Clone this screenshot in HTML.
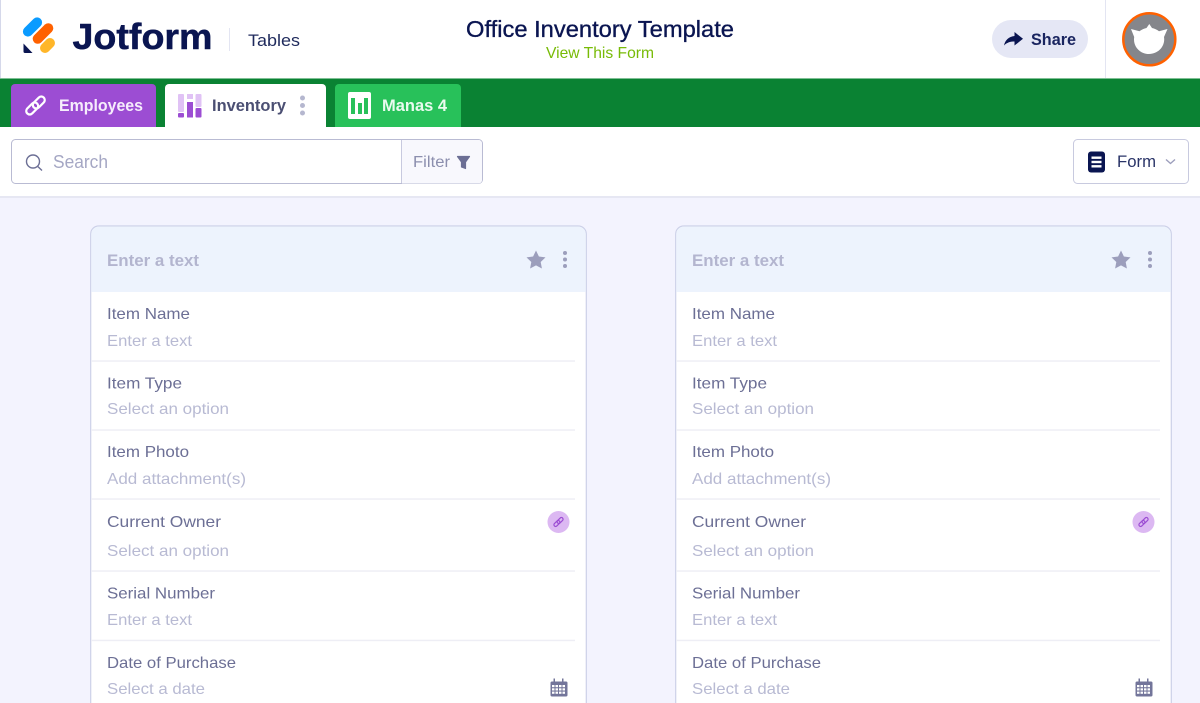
<!DOCTYPE html>
<html lang="en">
<head>
<meta charset="utf-8">
<title>Office Inventory Template</title>
<style>
html,body{margin:0;padding:0;width:1200px;height:703px;overflow:hidden;background:#f3f3fe}
svg{display:block}
text{font-family:"Liberation Sans",sans-serif}
.lb{font-size:16px;fill:#6c6f95}
.ph{font-size:16px;fill:#b8bad3}
</style>
</head>
<body>
<svg width="1200" height="703" viewBox="0 0 1200 703" xmlns="http://www.w3.org/2000/svg">
<defs>
<g id="card">
  <path d="M90.700 703V234a8 8 0 0 1 8-8h479.600a8 8 0 0 1 8 8V703" fill="#fff" stroke="#ccd0e8" stroke-width="1.200"/>
  <path d="M91.300 292V234a7.400 7.400 0 0 1 7.400-7.400h479.600a7.400 7.400 0 0 1 7.400 7.400V292z" fill="#edf3fd"/>
  <text x="107" y="266" font-size="17" font-weight="700" fill="#b3b5cf" textLength="92" lengthAdjust="spacingAndGlyphs">Enter a text</text>
  <path d="M536 250.500l2.900 6 6.600.9-4.800 4.600 1.200 6.500-5.900-3.100-5.900 3.100 1.200-6.500-4.800-4.600 6.600-.9z" fill="#9c9ebc"/>
  <circle cx="565" cy="253" r="2" fill="#9c9ebc"/><circle cx="565" cy="259.500" r="2" fill="#9c9ebc"/><circle cx="565" cy="266" r="2" fill="#9c9ebc"/>

  <text class="lb" x="107" y="319" textLength="83" lengthAdjust="spacingAndGlyphs">Item Name</text>
  <text class="ph" x="107" y="346" textLength="85" lengthAdjust="spacingAndGlyphs">Enter a text</text>
  <rect x="91" y="360.300" width="484" height="1.500" fill="#eeeef5"/>

  <text class="lb" x="107" y="388.300" textLength="75" lengthAdjust="spacingAndGlyphs">Item Type</text>
  <text class="ph" x="107" y="414" textLength="122" lengthAdjust="spacingAndGlyphs">Select an option</text>
  <rect x="91" y="429.300" width="484" height="1.500" fill="#eeeef5"/>

  <text class="lb" x="107" y="457" textLength="82" lengthAdjust="spacingAndGlyphs">Item Photo</text>
  <text class="ph" x="107" y="484" textLength="139" lengthAdjust="spacingAndGlyphs">Add attachment(s)</text>
  <rect x="91" y="498.300" width="484" height="1.500" fill="#eeeef5"/>

  <text class="lb" x="107" y="527" textLength="114" lengthAdjust="spacingAndGlyphs">Current Owner</text>
  <text class="ph" x="107" y="556" textLength="122" lengthAdjust="spacingAndGlyphs">Select an option</text>
  <circle cx="558.500" cy="522" r="11" fill="#dcb8f2"/>
  <g fill="none" stroke="#9c4dd3" stroke-width="1.200">
    <rect x="553.400" y="521.800" width="7" height="3.400" rx="1.700" transform="rotate(-45 556.900 523.500)"/>
    <rect x="556.600" y="518.800" width="7" height="3.400" rx="1.700" transform="rotate(-45 560.100 520.500)"/>
  </g>
  <rect x="91" y="570.300" width="484" height="1.500" fill="#eeeef5"/>

  <text class="lb" x="107" y="598.300" textLength="108" lengthAdjust="spacingAndGlyphs">Serial Number</text>
  <text class="ph" x="107" y="625" textLength="85" lengthAdjust="spacingAndGlyphs">Enter a text</text>
  <rect x="91" y="639.700" width="484" height="1.500" fill="#eeeef5"/>

  <text class="lb" x="107" y="668" textLength="129" lengthAdjust="spacingAndGlyphs">Date of Purchase</text>
  <text class="ph" x="107" y="694" textLength="98" lengthAdjust="spacingAndGlyphs">Select a date</text>
  <path d="M551 681.500h2.500v-3h1.500v3h7v-3h1.500v3h2.500a1.500 1.500 0 0 1 1.500 1.500v12a1.500 1.500 0 0 1-1.500 1.500h-14a1.500 1.500 0 0 1-1.500-1.500v-12a1.500 1.500 0 0 1 1.500-1.500z" fill="#73759a"/>
  <g fill="#fff">
    <rect x="552" y="685" width="2.500" height="2.200"/><rect x="555.500" y="685" width="2.500" height="2.200"/><rect x="559" y="685" width="2.500" height="2.200"/><rect x="562.500" y="685" width="2.500" height="2.200"/>
    <rect x="552" y="688.300" width="2.500" height="2.200"/><rect x="555.500" y="688.300" width="2.500" height="2.200"/><rect x="559" y="688.300" width="2.500" height="2.200"/><rect x="562.500" y="688.300" width="2.500" height="2.200"/>
    <rect x="552" y="691.600" width="2.500" height="2.200"/><rect x="555.500" y="691.600" width="2.500" height="2.200"/><rect x="559" y="691.600" width="2.500" height="2.200"/><rect x="562.500" y="691.600" width="2.500" height="2.200"/>
  </g>
</g>
</defs>

<!-- header -->
<rect width="1200" height="78" fill="#fff"/>
<rect x="0" y="0" width="1" height="78" fill="#d5d8ea"/>
<rect x="0" y="78" width="1200" height="1" fill="#7fbf95"/>

<!-- logo -->
<rect x="21" y="22" width="23" height="10" rx="5" transform="rotate(-45 32.500 27)" fill="#0a9bff"/>
<rect x="30.500" y="28.500" width="25" height="10" rx="5" transform="rotate(-45 43 33.500)" fill="#ff6100"/>
<rect x="39" y="40.500" width="17" height="10" rx="5" transform="rotate(-45 47.500 45.500)" fill="#ffb629"/>
<path d="M23.500 43.500L32.500 53H25a1.500 1.500 0 0 1-1.500-1.500z" fill="#0a1551"/>
<text x="72.500" y="49" font-size="36" font-weight="700" fill="#0a1551" stroke="#0a1551" stroke-width=".5" textLength="140" lengthAdjust="spacingAndGlyphs">Jotform</text>
<rect x="229" y="28" width="1" height="23" fill="#e3e5f2"/>
<text x="248" y="46" font-size="17" fill="#1f2a5c" textLength="52" lengthAdjust="spacingAndGlyphs">Tables</text>

<!-- title -->
<text x="466" y="37" font-size="23" fill="#0a1551" stroke="#0a1551" stroke-width=".35" textLength="268" lengthAdjust="spacingAndGlyphs">Office Inventory Template</text>
<text x="546" y="58" font-size="16" fill="#78bb07" textLength="108" lengthAdjust="spacingAndGlyphs">View This Form</text>

<!-- share -->
<rect x="992" y="20" width="96" height="38" rx="19" fill="#e5e7f5"/>
<path d="M1014.500 32l8.500 6.800-8.500 6.700v-4c-3.800 0-7.500.8-10.500 4 1-5.200 4.800-9 10.500-9.500z" fill="#0a1551"/>
<text x="1031" y="45" font-size="17" font-weight="700" fill="#1a2560" textLength="45" lengthAdjust="spacingAndGlyphs">Share</text>
<rect x="1105" y="0" width="1" height="78" fill="#e3e5f2"/>

<!-- avatar -->
<circle cx="1149.300" cy="39.300" r="26" fill="#85868b" stroke="#ff6100" stroke-width="2.500"/>
<path d="M1131 29l8.500 2.200c2-1.500 4.500-2.700 7-3.200l2.800-4 2.700 4c2.500.5 5 1.700 7 3.200l8.500-2.200-3.500 8c1.500 9-5.500 17-15 17s-16.300-8-14.800-17z" fill="#fff"/>

<!-- green bar -->
<rect x="0" y="79" width="1200" height="48" fill="#0a8233"/>

<!-- Employees tab -->
<path d="M11 127V88a4 4 0 0 1 4-4h137a4 4 0 0 1 4 4v39z" fill="#9c4dd3"/>
<g fill="none" stroke="#fff" stroke-width="2.200">
  <rect x="25.200" y="105" width="14" height="7" rx="3.500" transform="rotate(-45 32.200 108.500)"/>
  <rect x="31.800" y="99" width="14" height="7" rx="3.500" transform="rotate(-45 38.800 102.500)"/>
</g>
<text x="59" y="111" font-size="17" font-weight="700" fill="#f6edfc" textLength="84" lengthAdjust="spacingAndGlyphs">Employees</text>

<!-- Inventory tab -->
<path d="M165 127V88a4 4 0 0 1 4-4h153a4 4 0 0 1 4 4v39z" fill="#fff"/>
<g fill="#e0c2f5">
  <rect x="178" y="94" width="6" height="18" rx="1"/>
  <rect x="187" y="94" width="6" height="5"/>
  <rect x="195.500" y="94" width="6" height="13" rx="1"/>
</g>
<g fill="#9c4dd3">
  <rect x="178" y="113" width="6" height="4.500" rx="1"/>
  <rect x="187" y="102" width="6" height="15.500"/>
  <rect x="195.500" y="108" width="6" height="9.500" rx="1"/>
</g>
<text x="212" y="111" font-size="17" font-weight="700" fill="#4b4f73" textLength="74" lengthAdjust="spacingAndGlyphs">Inventory</text>
<circle cx="302.500" cy="98" r="2.500" fill="#b5b7cf"/><circle cx="302.500" cy="105.500" r="2.500" fill="#b5b7cf"/><circle cx="302.500" cy="113" r="2.500" fill="#b5b7cf"/>

<!-- Manas tab -->
<path d="M335 127V88a4 4 0 0 1 4-4h118a4 4 0 0 1 4 4v39z" fill="#28c15a"/>
<rect x="348" y="92" width="23" height="27" rx="2" fill="#fff"/>
<g fill="#28c15a">
  <rect x="351" y="98" width="4" height="16"/>
  <rect x="358" y="103" width="4" height="11"/>
  <rect x="364" y="98" width="4" height="16"/>
</g>
<text x="382" y="111" font-size="17" font-weight="700" fill="#eafbef" textLength="65" lengthAdjust="spacingAndGlyphs">Manas 4</text>

<!-- toolbar -->
<rect x="0" y="127" width="1200" height="69" fill="#fff"/>
<rect x="0" y="196" width="1200" height="2" fill="#e6e7f3"/>

<rect x="11.500" y="139.500" width="471" height="44" rx="4" fill="#fff" stroke="#b9bbd3"/>
<path d="M402 140h76.500a3.500 3.500 0 0 1 3.500 3.500v36.500a3.500 3.500 0 0 1-3.500 3.500H402z" fill="#f8f8fd"/>
<rect x="401" y="140" width="1" height="43" fill="#c8cadf"/>
<circle cx="33" cy="161.500" r="6.500" fill="none" stroke="#6c6f95" stroke-width="1.400"/>
<path d="M37.800 166.500L42 170.500" stroke="#6c6f95" stroke-width="1.400" fill="none"/>
<text x="53" y="168" font-size="18" fill="#a5a7c4" textLength="55" lengthAdjust="spacingAndGlyphs">Search</text>
<text x="413" y="167" font-size="15.500" fill="#8c8fae" textLength="37" lengthAdjust="spacingAndGlyphs">Filter</text>
<path d="M457.500 156.500h12l-4 5.500v6.500l-4-1.500v-5z" fill="#6c6f95" stroke="#6c6f95" stroke-width="1.200" stroke-linejoin="round"/>

<rect x="1073.500" y="139.500" width="115" height="44" rx="4" fill="#fff" stroke="#c8cadf"/>
<rect x="1088" y="151.500" width="17" height="21" rx="3" fill="#0a1551"/>
<g fill="#fff"><rect x="1091.500" y="156.500" width="10" height="2.400"/><rect x="1091.500" y="160.800" width="10" height="2.400"/><rect x="1091.500" y="165.100" width="10" height="2.400"/></g>
<text x="1117" y="167" font-size="17" fill="#2a3468" textLength="39" lengthAdjust="spacingAndGlyphs">Form</text>
<path d="M1166 159.500l4.500 4 4.500-4" fill="none" stroke="#9c9ebc" stroke-width="1.400"/>

<!-- cards -->
<use href="#card"/>
<use href="#card" x="585"/>
</svg>
</body>
</html>
